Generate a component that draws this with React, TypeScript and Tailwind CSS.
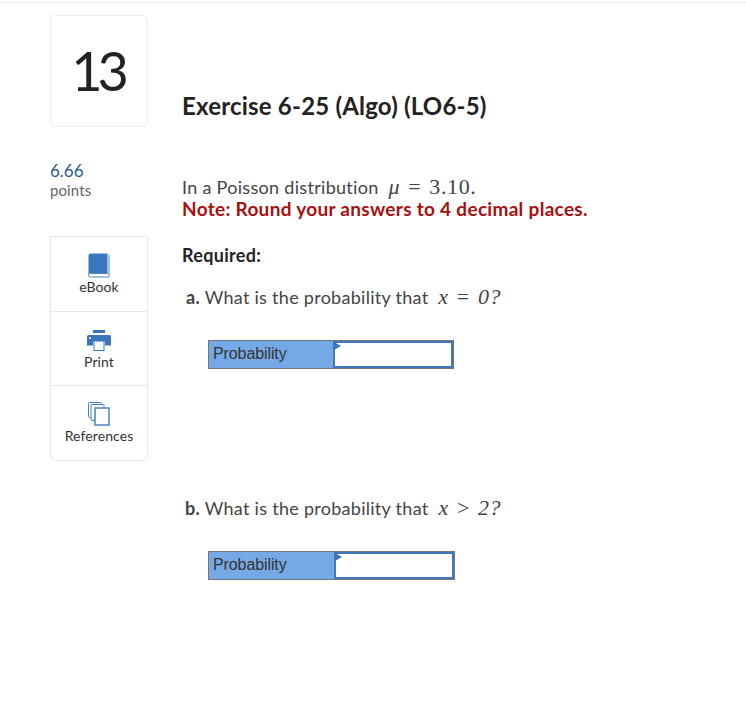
const sans = "font-['Lato','Open_Sans',sans-serif]"

function MathText({ children }: { children: React.ReactNode }) {
  return (
    <span className="ml-[5px] font-['Liberation_Serif',serif] text-[22px] tracking-[0.6px] text-[#444] [word-spacing:2px]">
      {children}
    </span>
  )
}

function BookIcon() {
  return (
    <svg width="22" height="25" viewBox="0 0 22 25">
      <path d="M2.500 0.500H19.500V20H3.500C2 20 0.500 20.600 0.500 21.500V2.500C0.500 1.500 1.500 0.500 2.500 0.500z" fill="#3b76bd" />
      <path d="M21 1.500V24H3.500C1.500 24 0.500 23.400 0.500 22S1.500 20.500 3.500 20.500H20" fill="none" stroke="#4a82c6" />
    </svg>
  )
}

function PrintIcon() {
  return (
    <svg width="24" height="21" viewBox="0 0 24 21">
      <rect x="6" y="0" width="12" height="3" fill="#3b76bd" />
      <path d="M1.500 5h21A1.500 1.500 0 0 1 24 6.500V15.500H18V11H6v4.500H0V6.500A1.500 1.500 0 0 1 1.500 5z" fill="#3b76bd" />
      <rect x="7" y="11" width="10" height="9.500" fill="#fff" stroke="#3b76bd" />
      <circle cx="3" cy="8" r="1" fill="#fff" />
    </svg>
  )
}

function RefIcon() {
  return (
    <svg width="22" height="24" viewBox="0 0 22 24">
      <rect x="0.500" y="0.500" width="13" height="15" rx="1" fill="#fff" stroke="#4a82c6" />
      <rect x="3" y="2.500" width="13" height="16" rx="1" fill="#fff" stroke="#4a82c6" />
      <rect x="7" y="6" width="14" height="17" fill="#fff" stroke="#4a82c6" strokeWidth="1.500" />
    </svg>
  )
}

function ToolButton({ icon, label, className }: { icon: React.ReactNode; label: string; className: string }) {
  return (
    <div className={`flex flex-col items-center pt-[14px] ${className}`}>
      <div className="flex h-[28px] items-center justify-center">{icon}</div>
      <div className="text-[14px] leading-[16px] tracking-[0.1px] text-[#333]">{label}</div>
    </div>
  )
}

function AnswerTable({ width, labelWidth }: { width: string; labelWidth: string }) {
  return (
    <div className={`ml-[26px] flex h-[29px] ${width} border border-[#777] bg-white`}>
      <div className={`flex ${labelWidth} items-center bg-[#75a9e5] pb-[1px] pl-[4px] font-['Liberation_Sans',sans-serif] text-[16px] tracking-[-0.1px] text-[#333]`}>
        Probability
      </div>
      <div className="relative flex-1 border-2 border-[#4377b5] bg-white">
        <div className="absolute left-[-1px] top-[-1px] h-0 w-0 border-y-[4px] border-l-[7px] border-y-transparent border-l-[#3b76bd]" />
      </div>
    </div>
  )
}

export default function App() {
  return (
    <div className={`h-[709px] w-[746px] overflow-hidden bg-white ${sans}`}>
      <div className="h-[3px] w-full border-b border-[#eeeeee]" />
      <div className="flex pl-[50px] pt-[12px]">
        <div className="w-[98px]">
          <div className="flex h-[112px] items-center justify-center rounded-[6px] border border-[#eeeeee] pr-[3px] text-[54px] font-normal leading-none tracking-[-5px] text-[#222]">
            13
          </div>
          <div className="mt-[34px] text-[17px] leading-[20px] text-[#2c5a94]">6.66</div>
          <div className="mt-[-1px] text-[15px] leading-[20px] tracking-[0.1px] text-[#666]">points</div>
          <div className="mt-[36px] rounded-b-[6px] border border-[#e8e8e8]">
            <ToolButton icon={<BookIcon />} label="eBook" className="h-[75px] border-b border-[#e8e8e8]" />
            <ToolButton icon={<PrintIcon />} label="Print" className="h-[74px] border-b border-[#e8e8e8]" />
            <ToolButton icon={<RefIcon />} label="References" className="h-[74px]" />
          </div>
        </div>
        <div className="ml-[34px] flex-1">
          <h1 className="mt-[76px] text-[24px] font-bold leading-[30px] tracking-[0.2px] text-[#222]">Exercise 6-25 (Algo) (LO6-5)</h1>
          <p className="mt-[55px] text-[18px] leading-[22px] tracking-[0.3px] text-[#444]">
            In a Poisson distribution <MathText><i>μ</i> = 3.10.</MathText>
          </p>
          <p className="text-[19px] font-bold leading-[21px] tracking-[0.3px] text-[#a90f0f]">Note: Round your answers to 4 decimal places.</p>
          <p className="mt-[25px] text-[18px] font-bold leading-[22px] tracking-[0.3px] text-[#222]">Required:</p>
          <p className="ml-[4px] mt-[19px] text-[18px] leading-[24px] tracking-[0.28px] text-[#444]">
            <b>a.</b> What is the probability that <MathText><i>x</i> = <i>0?</i></MathText>
          </p>
          <div className="mt-[31px]">
            <AnswerTable width="w-[246px]" labelWidth="w-[124px]" />
          </div>
          <p className="ml-[3px] mt-[127px] text-[18px] leading-[24px] tracking-[0.28px] text-[#444]">
            <b>b.</b> What is the probability that <MathText><i>x</i> &gt; <i>2?</i></MathText>
          </p>
          <div className="mt-[31px]">
            <AnswerTable width="w-[247px]" labelWidth="w-[125px]" />
          </div>
        </div>
      </div>
    </div>
  )
}
